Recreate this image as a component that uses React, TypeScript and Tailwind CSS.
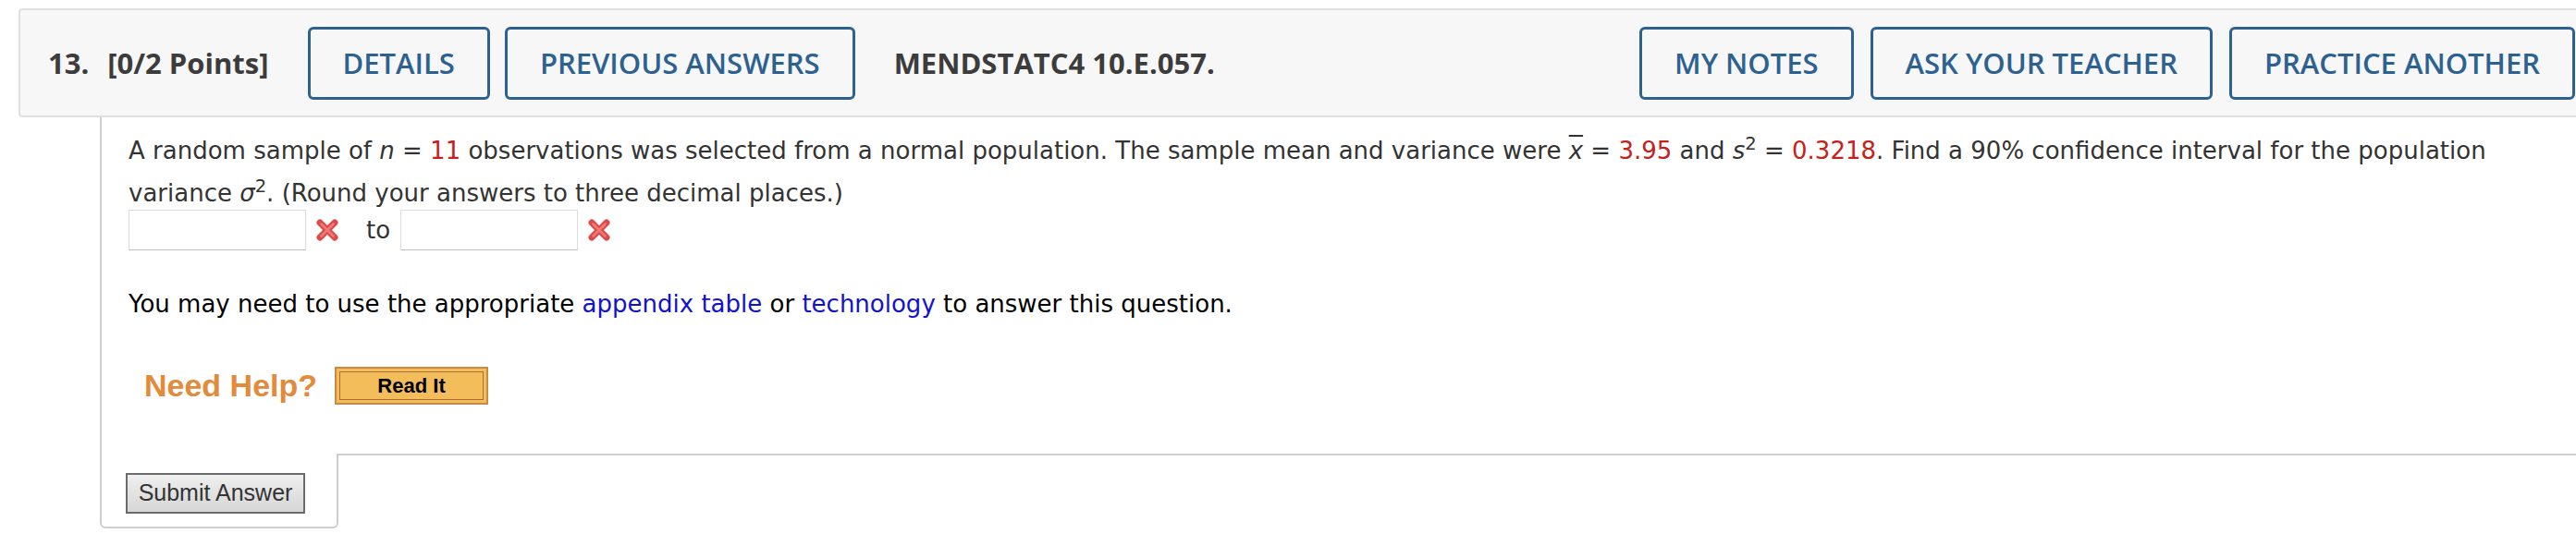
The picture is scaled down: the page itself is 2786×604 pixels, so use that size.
// One homework question card: the header strip with its action buttons,
// the question text with two answer boxes (both marked wrong), a help row
// and the submit tab underneath.

const BODY = "font-['DejaVu_Sans','Verdana',sans-serif]"
const HEAD = "font-['Open_Sans',sans-serif]"
const ARIAL = "font-['Liberation_Sans','Arial',sans-serif]"

function HeaderButton({ label }: { label: string }) {
  return (
    <button
      className={`${HEAD} h-[79px] shrink-0 rounded-[6px] border-[3px] border-[#2d6190] px-[35px] text-[31px] font-semibold text-[#2d6190]`}
    >
      {label}
    </button>
  )
}

function WrongMark() {
  return (
    <svg width="26" height="26" viewBox="0 0 26 26" className="shrink-0">
      <path d="M5 5 L21 21 M21 5 L5 21" stroke="#dc4a4a" strokeWidth="7" strokeLinecap="round" />
      <path d="M6.5 6.5 L19.5 19.5 M19.5 6.5 L6.5 19.5" stroke="#ee7a7a" strokeWidth="2.5" strokeLinecap="round" />
    </svg>
  )
}

function AnswerBox() {
  return (
    <input
      type="text"
      className="h-[44px] w-[192px] shrink-0 border border-[#dcdcdc] border-b-[#bdbdbd] bg-white px-2 text-[24px] outline-none"
    />
  )
}

const red = 'text-[#c4211b]'

export default function App() {
  return (
    <div className="min-h-[604px] w-full bg-white pt-[9px]">
      {/* header strip */}
      <div className="pl-[20px]">
        <div className="flex h-[118px] items-center rounded-l-[4px] border-y-2 border-l-2 border-[#e0e0e0] bg-[#f7f7f7] pl-[30px] pr-px">
          <span className={`${HEAD} text-[31px] font-bold text-[#3c3c3c]`}>13.</span>
          <span className={`${HEAD} ml-[20px] text-[31px] font-bold text-[#3c3c3c]`}>[0/2 Points]</span>
          <div className="ml-[42px] flex gap-[16px]">
            <HeaderButton label="DETAILS" />
            <HeaderButton label="PREVIOUS ANSWERS" />
          </div>
          <span className={`${HEAD} ml-[42px] text-[31px] font-bold text-[#3c3c3c]`}>MENDSTATC4 10.E.057.</span>
          <div className="ml-auto flex gap-[18px]">
            <HeaderButton label="MY NOTES" />
            <HeaderButton label="ASK YOUR TEACHER" />
            <HeaderButton label="PRACTICE ANOTHER" />
          </div>
        </div>
      </div>

      {/* question body */}
      <div className="ml-[108px]">
        <div className={`${BODY} border-l-2 border-[#cfcfcf] pb-[53px] pl-[29px] pr-[20px] pt-[13px] text-[26px] text-[#333]`}>
          <p className="leading-[46px]">
            A random sample of <i>n</i> = <span className={red}>11</span> observations was selected from a normal
            population. The sample mean and variance were <i className="overline">x</i> ={' '}
            <span className={red}>3.95</span> and <i>s</i>
            <sup>2</sup> = <span className={red}>0.3218</span>. Find a 90% confidence interval for the population
            variance <i>σ</i>
            <sup>2</sup>. (Round your answers to three decimal places.)
          </p>
          <div className="-mt-[5px] flex items-center">
            <AnswerBox />
            <span className="ml-[10px]">
              <WrongMark />
            </span>
            <span className="ml-[29px] mr-[11px]">to</span>
            <AnswerBox />
            <span className="ml-[10px]">
              <WrongMark />
            </span>
          </div>
          <p className="mt-[35px] leading-[46px] text-black">
            You may need to use the appropriate <span className="text-[#1212cc]">appendix table</span> or{' '}
            <span className="text-[#1212cc]">technology</span> to answer this question.
          </p>
          <div className="mt-[45px] flex h-[41px] items-center pl-[17px]">
            <span className={`${ARIAL} text-[34px] font-bold text-[#e28b3a]`}>Need Help?</span>
            <div className="ml-[19px] h-[41px] w-[166px] border-2 border-[#c98a46] bg-[#f3bd5b] p-[3px]">
              <div
                className={`${ARIAL} flex h-full items-center justify-center border border-[#a56f36] text-[22px] font-bold text-black`}
              >
                Read It
              </div>
            </div>
          </div>
        </div>

        {/* submit tab */}
        <div className="flex">
          <div className="w-[258px] shrink-0 rounded-b-[6px] border-x-2 border-b-2 border-[#cfcfcf] pb-[14px] pl-[26px] pt-[21px]">
            <button
              className={`${ARIAL} h-[44px] w-[194px] border-2 border-[#6b6b6b] bg-gradient-to-b from-[#efefef] to-[#d6d6d6] text-[25px] text-[#333]`}
            >
              Submit Answer
            </button>
          </div>
          <div className="flex-1 border-t-2 border-[#cfcfcf]" />
        </div>
      </div>
    </div>
  )
}
